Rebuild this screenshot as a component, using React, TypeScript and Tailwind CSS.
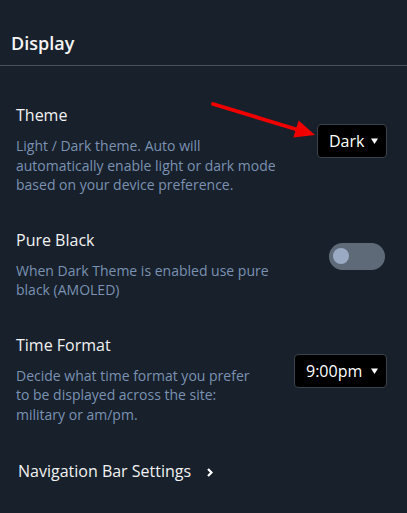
import { ReactNode } from "react";

function Caret() {
  return (
    <svg width="7" height="6" viewBox="0 0 7 6" className="shrink-0">
      <path d="M0 0.5 H7 L3.5 6 Z" fill="#ffffff" />
    </svg>
  );
}

function Dropdown({ value, width }: { value: string; width: string }) {
  return (
    <div
      className={`flex h-[34px] items-center justify-between rounded-[4px] border border-[#3b4249] bg-black pl-[11px] pr-[8px] text-[16px] text-white ${width}`}
    >
      <span>{value}</span>
      <Caret />
    </div>
  );
}

function Toggle() {
  return (
    <div className="mr-[2px] flex h-[27px] w-[56px] items-center rounded-full bg-[#5e6a78] pl-[4px]">
      <div className="h-[16px] w-[16px] rounded-full bg-[#9aaac3]" />
    </div>
  );
}

function SettingRow({
  title,
  description,
  control,
}: {
  title: string;
  description: string;
  control: ReactNode;
}) {
  return (
    <div className="flex items-center gap-[30px] pl-4 pr-5">
      <div className="flex-1">
        <div className="text-[16px] leading-6 text-[#f2f2f2]">{title}</div>
        <p className="mt-[9px] text-[14px] leading-[19.5px] text-[#7b92b2]">
          {description}
        </p>
      </div>
      <div className="mb-[15px] shrink-0">{control}</div>
    </div>
  );
}

export default function App() {
  return (
    <div
      className="relative min-h-screen bg-[#17202b]"
      style={{ fontFamily: '"Open Sans", sans-serif' }}
    >
      <div className="border-b border-[#48525f] px-[11px] pt-[31px] pb-[10px]">
        <h2 className="text-[18px] font-semibold leading-6 text-[#f5f5f5]">
          Display
        </h2>
      </div>

      <div className="flex flex-col gap-[33px] pt-[37px]">
        <SettingRow
          title="Theme"
          description="Light / Dark theme. Auto will automatically enable light or dark mode based on your device preference."
          control={<Dropdown value="Dark" width="w-[70px]" />}
        />
        <SettingRow
          title="Pure Black"
          description="When Dark Theme is enabled use pure black (AMOLED)"
          control={<Toggle />}
        />
        <SettingRow
          title="Time Format"
          description="Decide what time format you prefer to be displayed across the site: military or am/pm."
          control={<Dropdown value="9:00pm" width="w-[93px]" />}
        />
      </div>

      <div className="mt-[35px] flex items-center pl-[18px] text-[16px] leading-6 text-[#f2f2f2]">
        <span>Navigation Bar Settings</span>
        <svg width="6" height="9" viewBox="0 0 6 9" className="ml-[16px] mt-[2px]">
          <path d="M1 1 L4.5 4.5 L1 8" fill="none" stroke="#ffffff" strokeWidth="2.2" />
        </svg>
      </div>

      {/* red annotation arrow */}
      <svg
        className="pointer-events-none absolute left-0 top-0"
        width="407"
        height="513"
        viewBox="0 0 407 513"
      >
        <line x1="213" y1="104" x2="297" y2="129.5" stroke="#f00000" strokeWidth="3.8" strokeLinecap="round" />
        <path d="M315 135 L293.4 137.5 L298.6 120.5 Z" fill="#f00000" />
      </svg>
    </div>
  );
}
